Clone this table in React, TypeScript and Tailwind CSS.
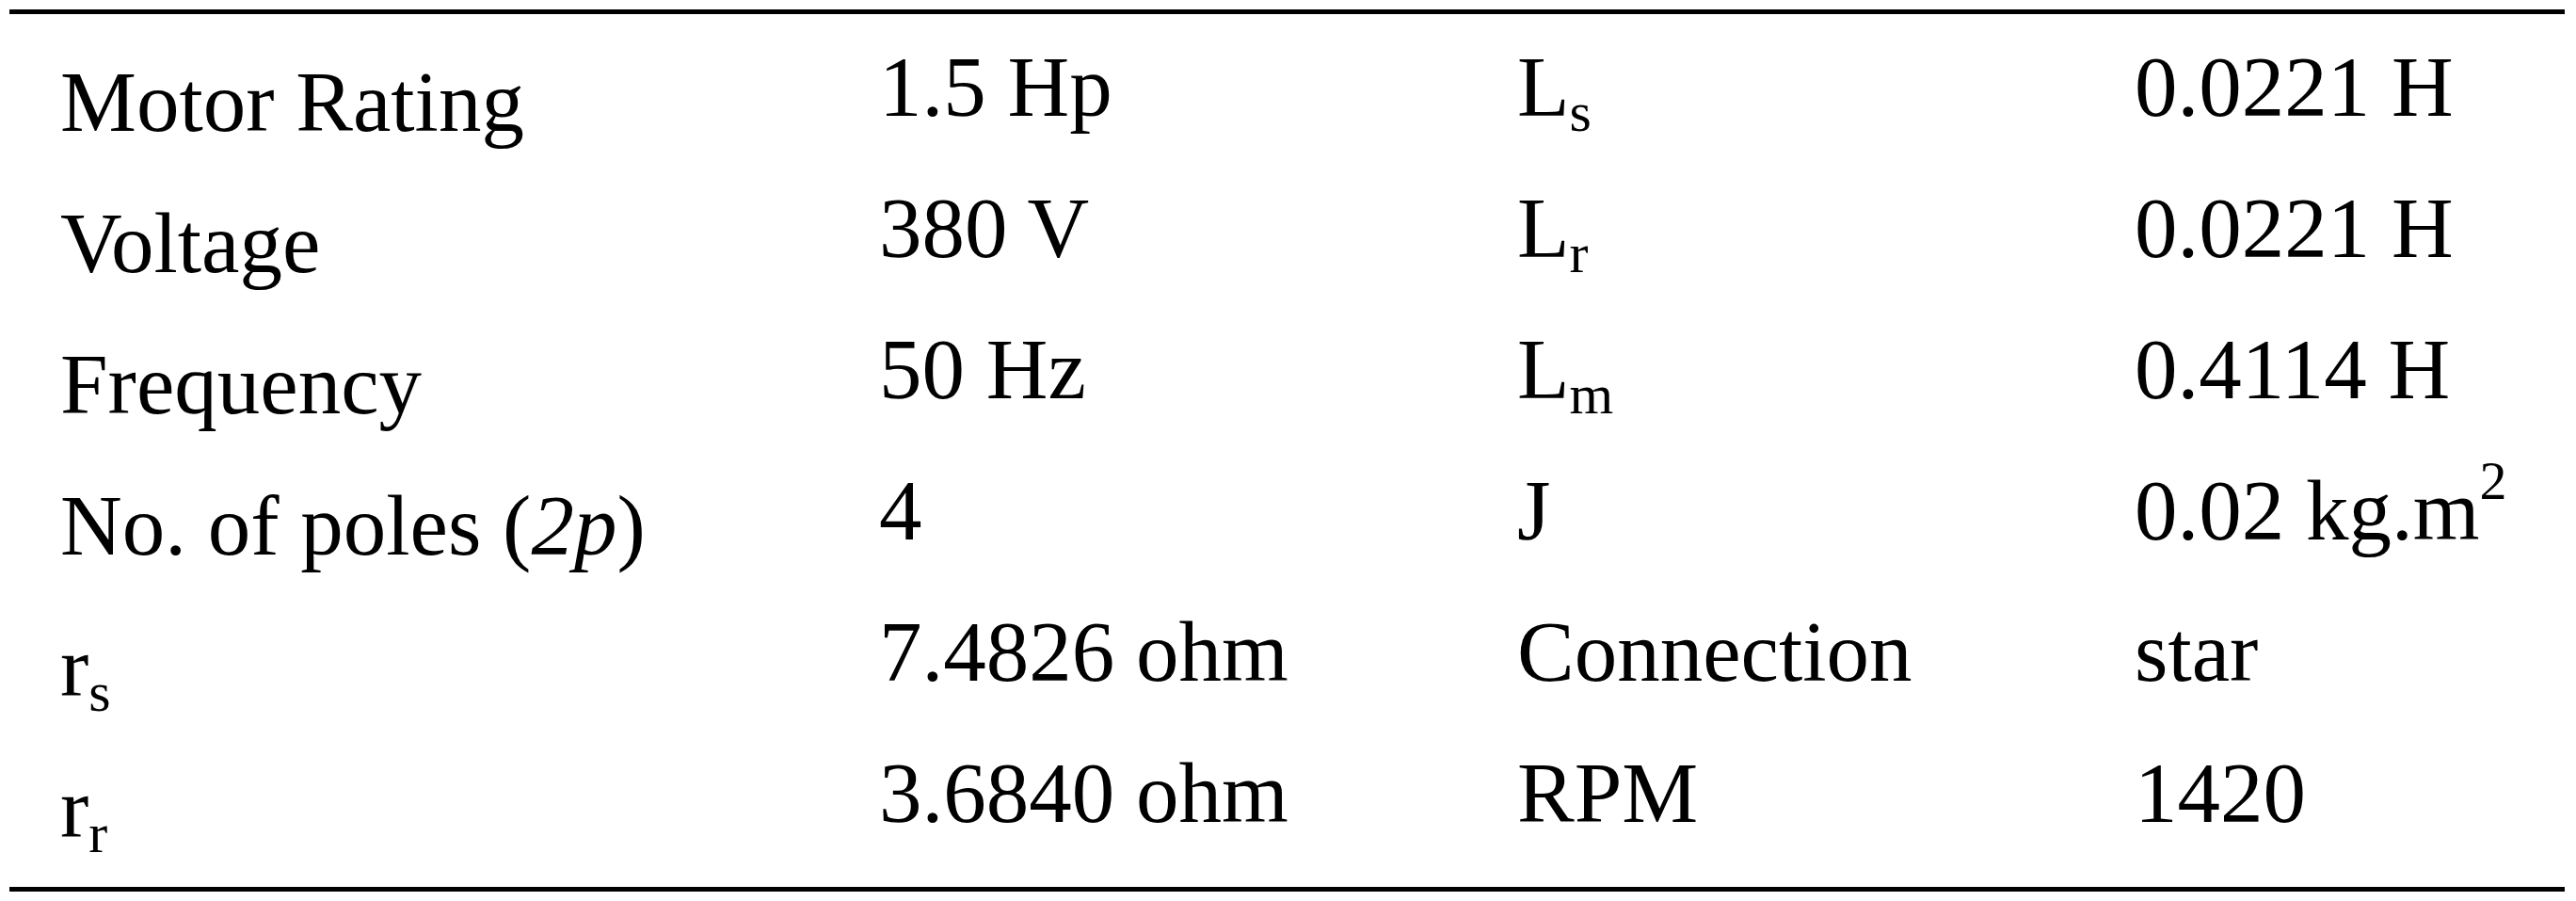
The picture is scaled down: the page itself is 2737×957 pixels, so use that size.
import type { ReactNode } from 'react';

interface ParamRow {
  label: ReactNode;
  value: ReactNode;
  symbol: ReactNode;
  amount: ReactNode;
}

function Sub({ children }: { children: ReactNode }) {
  return <sub className="text-[60px] bottom-[-16px]">{children}</sub>;
}

const rows: ParamRow[] = [
  { label: 'Motor Rating', value: '1.5 Hp', symbol: <>L<Sub>s</Sub></>, amount: '0.0221 H' },
  { label: 'Voltage', value: '380 V', symbol: <>L<Sub>r</Sub></>, amount: '0.0221 H' },
  { label: 'Frequency', value: '50 Hz', symbol: <>L<Sub>m</Sub></>, amount: '0.4114 H' },
  {
    label: <>No. of poles (<i>2p</i>)</>,
    value: '4',
    symbol: 'J',
    amount: <>0.02 kg.m<sup className="text-[58px] top-[-43px]">2</sup></>,
  },
  { label: <>r<Sub>s</Sub></>, value: '7.4826 ohm', symbol: 'Connection', amount: 'star' },
  { label: <>r<Sub>r</Sub></>, value: '3.6840 ohm', symbol: 'RPM', amount: '1420' },
];

export default function App() {
  return (
    <div className="w-[2737px] h-[957px] bg-white pt-[10px] pl-[10px] font-['Liberation_Serif',serif] text-black">
      <div className="w-[2715px] border-y-[5px] border-black pt-[3px] pb-[24px]">
        <div className="grid grid-cols-[870px_678px_656px_1fr] pl-[54px] text-[91px] leading-[150px] whitespace-nowrap">
          {rows.map((row, i) => (
            <div key={i} className="contents">
              <div className="h-[150px] pt-[16px]">{row.label}</div>
              <div className="h-[150px]">{row.value}</div>
              <div className="h-[150px]">{row.symbol}</div>
              <div className="h-[150px]">{row.amount}</div>
            </div>
          ))}
        </div>
      </div>
    </div>
  );
}
